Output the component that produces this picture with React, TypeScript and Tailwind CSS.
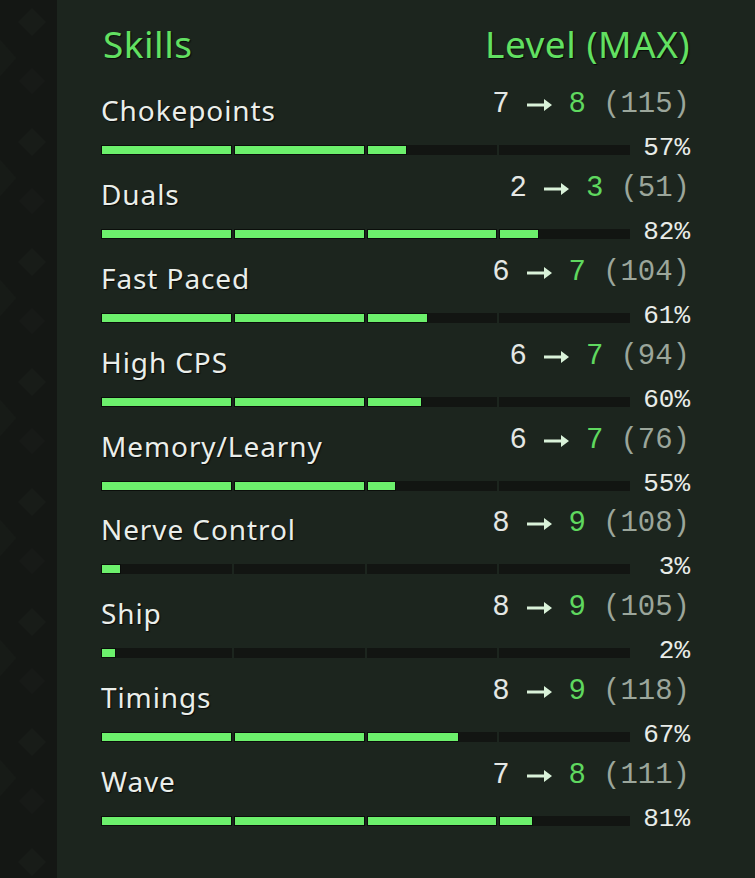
import React from 'react';

type Skill = {
  name: string;
  from: number;
  to: number;
  max: number;
  pct: number;
};

const skills: Skill[] = [
  { name: 'Chokepoints', from: 7, to: 8, max: 115, pct: 57 },
  { name: 'Duals', from: 2, to: 3, max: 51, pct: 82 },
  { name: 'Fast Paced', from: 6, to: 7, max: 104, pct: 61 },
  { name: 'High CPS', from: 6, to: 7, max: 94, pct: 60 },
  { name: 'Memory/Learny', from: 6, to: 7, max: 76, pct: 55 },
  { name: 'Nerve Control', from: 8, to: 9, max: 108, pct: 3 },
  { name: 'Ship', from: 8, to: 9, max: 105, pct: 2 },
  { name: 'Timings', from: 8, to: 9, max: 118, pct: 67 },
  { name: 'Wave', from: 7, to: 8, max: 111, pct: 81 },
];

const BAR_W = 529;
const SEG_W = (BAR_W - 6) / 4;

function ProgressBar({ pct }: { pct: number }) {
  const total = (pct / 100) * BAR_W + 4;
  return (
    <div className="grid w-[529px] grid-cols-4 gap-[2px]">
      {[0, 1, 2, 3].map((i) => {
        const start = i * (SEG_W + 2);
        const fill = Math.max(0, Math.min(SEG_W, total - start));
        return (
          <div key={i} className="h-[10px] bg-[#121512]">
            {fill > 0 && (
              <div
                className="h-full border border-[#0b0e0b] bg-[#6cf06c]"
                style={{ width: `${fill}px` }}
              />
            )}
          </div>
        );
      })}
    </div>
  );
}

function Arrow() {
  return (
    <svg width="27" height="14" viewBox="0 0 27 14" className="mx-[16px] inline-block">
      <path d="M1 5.5h17V1l8 6-8 6V8.5H1z" fill="#d9f2d9" />
    </svg>
  );
}

function SkillRow({ skill }: { skill: Skill }) {
  return (
    <div className="h-[83.9px]">
      <div className="flex h-[40px] items-start justify-between">
        <span className="pt-[5px] text-[28px] leading-[30px] tracking-[0.9px] text-[#eaeeea] [text-shadow:1px_1px_1px_#080a08]">
          {skill.name}
        </span>
        <span className="flex items-center pt-[2px] font-['Liberation_Mono',monospace] text-[29px] leading-[26px]">
          <span className="text-[#e4e7e4]">{skill.from}</span>
          <Arrow />
          <span className="text-[#5fd85f]">{skill.to}</span>
          <span className="ml-[17px] text-[#9ba69b]">({skill.max})</span>
        </span>
      </div>
      <div className="mt-[10px] flex items-center justify-between">
        <ProgressBar pct={skill.pct} />
        <span className="-mt-[4px] font-['Liberation_Mono',monospace] text-[26px] leading-[24px] text-[#e8ece8]">
          {skill.pct}%
        </span>
      </div>
    </div>
  );
}

function SidePattern() {
  return (
    <svg width="57" height="878" className="block">
      <defs>
        <pattern id="dia" width="57" height="120" patternUnits="userSpaceOnUse">
          <path d="M32 8l14 14-14 14-14-14z" fill="#181c18" />
          <path d="M32 68l13 13-13 13-13-13z" fill="#171a17" />
          <path d="M0 40l16 18-16 18z" fill="#171b17" />
        </pattern>
      </defs>
      <rect width="57" height="878" fill="#141714" />
      <rect width="57" height="878" fill="url(#dia)" />
    </svg>
  );
}

export default function App() {
  return (
    <div className="flex h-[878px] w-[755px] overflow-hidden bg-[#1c251e] font-['Noto_Sans',sans-serif]">
      <div className="w-[57px] shrink-0 border-r border-[#121512]">
        <SidePattern />
      </div>
      <div className="flex-1 pl-[44px] pr-[65px]">
        <div className="flex h-[90px] items-start justify-between pt-[20px] text-[37px] leading-[48px] tracking-[0.5px] text-[#62e062] [text-shadow:1px_1px_1px_#080a08]">
          <span className="pl-[2px]">Skills</span>
          <span>Level (MAX)</span>
        </div>
        {skills.map((s) => (
          <SkillRow key={s.name} skill={s} />
        ))}
      </div>
    </div>
  );
}
